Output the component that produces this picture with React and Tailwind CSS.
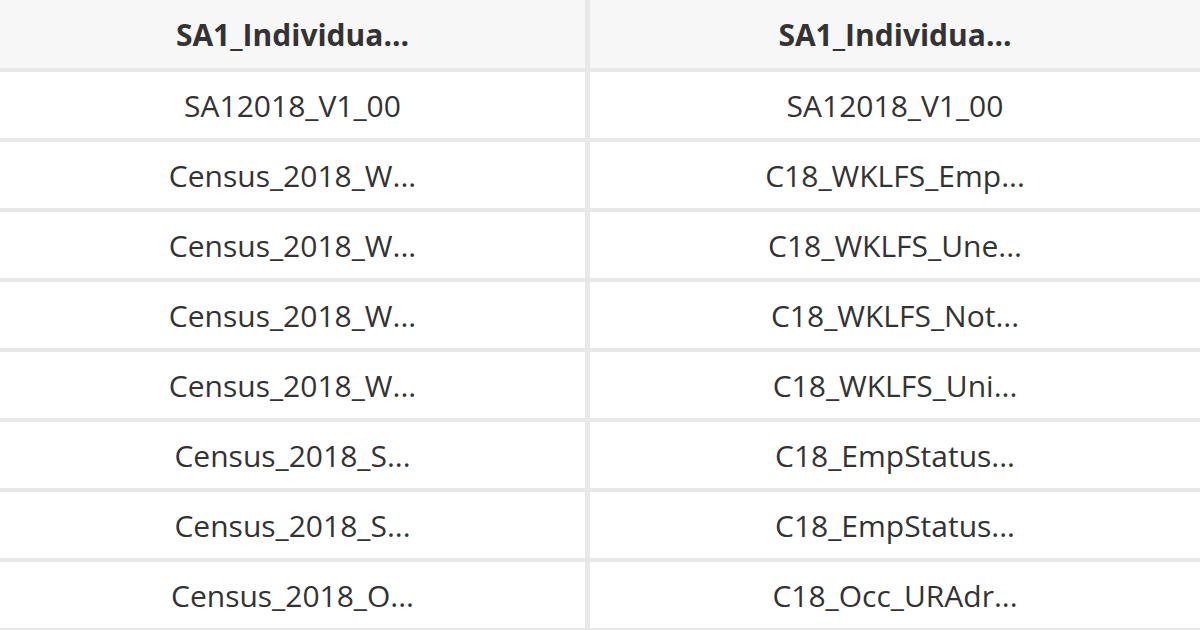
const rows = [
  ["SA12018_V1_00", "SA12018_V1_00"],
  ["Census_2018_W...", "C18_WKLFS_Emp..."],
  ["Census_2018_W...", "C18_WKLFS_Une..."],
  ["Census_2018_W...", "C18_WKLFS_Not..."],
  ["Census_2018_W...", "C18_WKLFS_Uni..."],
  ["Census_2018_S...", "C18_EmpStatus..."],
  ["Census_2018_S...", "C18_EmpStatus..."],
  ["Census_2018_O...", "C18_Occ_URAdr..."],
];

function HeadCell({ children }) {
  return (
    <div className="h-[68px] box-content bg-[#f7f7f7] border-b-4 border-[#e8e8e8] flex items-center justify-center text-[30px] font-bold text-[#333333]">
      {children}
    </div>
  );
}

function Cell({ children }) {
  return (
    <div className="h-[66px] box-content bg-white border-b-4 border-[#e8e8e8] flex items-center justify-center text-[30px] text-[#333333]">
      {children}
    </div>
  );
}

export default function App() {
  const cells = [];
  rows.forEach(([a, b], i) => {
    cells.push(<Cell key={"a" + i}>{a}</Cell>);
    cells.push(<Cell key={"b" + i}>{b}</Cell>);
  });
  return (
    <div className="w-[1200px] h-[630px] overflow-hidden bg-white font-['Open_Sans',sans-serif]">
      <div className="grid grid-cols-[585px_610px] gap-x-[5px] bg-[#e8e8e8]">
        <HeadCell>SA1_Individua...</HeadCell>
        <HeadCell>SA1_Individua...</HeadCell>
        {cells}
      </div>
    </div>
  );
}
